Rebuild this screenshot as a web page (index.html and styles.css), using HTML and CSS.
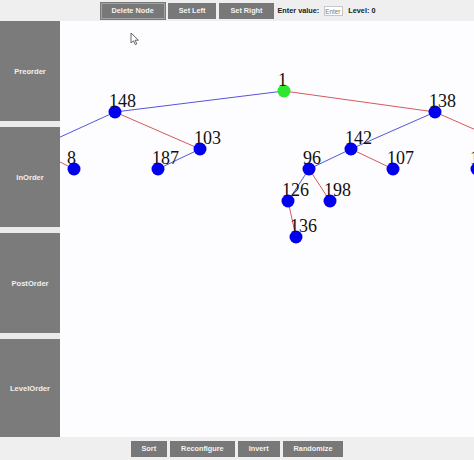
FILE: index.html
```html
<!DOCTYPE html>
<html>
<head>
<meta charset="utf-8">
<link rel="stylesheet" href="styles.css">
</head>
<body>
<div class="app">
  <div class="bar top">
    <button class="btn focused">Delete Node</button>
    <button class="btn">Set Left</button>
    <button class="btn">Set Right</button>
    <span class="label first">Enter value:</span>
    <input class="value" type="text" placeholder="Enter">
    <span class="label">Level: 0</span>
  </div>
  <div class="middle">
    <div class="sidebar">
      <div class="panel">Preorder</div>
      <div class="panel">InOrder</div>
      <div class="panel">PostOrder</div>
      <div class="panel last">LevelOrder</div>
    </div>
    <div class="canvas">
      <svg class="tree" width="414" height="416" viewBox="60 21 414 416">
        <g class="edges">
          <line class="l" x1="284" y1="91" x2="115" y2="112"/>
          <line class="r" x1="284" y1="91" x2="435" y2="112"/>
          <line class="l" x1="115" y1="112" x2="34" y2="149"/>
          <line class="r" x1="115" y1="112" x2="200" y2="149"/>
          <line class="r" x1="34" y1="149" x2="74" y2="169"/>
          <line class="l" x1="200" y1="149" x2="158" y2="169"/>
          <line class="l" x1="435" y1="112" x2="351" y2="149"/>
          <line class="r" x1="435" y1="112" x2="519" y2="149"/>
          <line class="l" x1="519" y1="149" x2="477" y2="169"/>
          <line class="l" x1="351" y1="149" x2="309" y2="169"/>
          <line class="r" x1="351" y1="149" x2="393" y2="169"/>
          <line class="l" x1="309" y1="169" x2="288" y2="201"/>
          <line class="r" x1="309" y1="169" x2="330" y2="201"/>
          <line class="r" x1="288" y1="201" x2="296" y2="237"/>
        </g>
        <g class="nodes">
          <circle class="root" cx="284" cy="91" r="6.5"/>
          <circle cx="115" cy="112" r="6.5"/>
          <circle cx="435" cy="112" r="6.5"/>
          <circle cx="74" cy="169" r="6.5"/>
          <circle cx="158" cy="169" r="6.5"/>
          <circle cx="200" cy="149" r="6.5"/>
          <circle cx="351" cy="149" r="6.5"/>
          <circle cx="309" cy="169" r="6.5"/>
          <circle cx="393" cy="169" r="6.5"/>
          <circle cx="288" cy="201" r="6.5"/>
          <circle cx="330" cy="201" r="6.5"/>
          <circle cx="296" cy="237" r="6.5"/>
          <circle cx="477" cy="169" r="6.5"/>
        </g>
        <g class="labels">
          <text x="278" y="86">1</text>
          <text x="109" y="107">148</text>
          <text x="429" y="107">138</text>
          <text x="67" y="164">8</text>
          <text x="152" y="164">187</text>
          <text x="194" y="144">103</text>
          <text x="345" y="144">142</text>
          <text x="303" y="164">96</text>
          <text x="387" y="164">107</text>
          <text x="282" y="196">126</text>
          <text x="324" y="196">198</text>
          <text x="290" y="232">136</text>
          <text x="470" y="164">1</text>
        </g>
      </svg>
      <svg class="cursor" width="10" height="14" viewBox="0 0 10 14">
        <path d="M1 1 L1 11 L3.5 8.8 L5.3 12.6 L6.8 11.9 L5.1 8.2 L8.4 8.2 Z" fill="#fff" stroke="#555" stroke-width="0.9"/>
      </svg>
    </div>
  </div>
  <div class="bar bottom">
    <button class="btn">Sort</button>
    <button class="btn">Reconfigure</button>
    <button class="btn">Invert</button>
    <button class="btn">Randomize</button>
  </div>
</div>
</body>
</html>
```
FILE: styles.css
```css
html, body {
  margin: 0;
  padding: 0;
  background: #fdfcff;
}
.app {
  width: 474px;
  height: 460px;
  display: flex;
  flex-direction: column;
  overflow: hidden;
  font-family: "Liberation Sans", Arial, sans-serif;
}
.bar {
  background: #efefef;
  display: flex;
  align-items: flex-start;
  justify-content: center;
  gap: 3px;
  flex: none;
  box-sizing: border-box;
}
.bar.top {
  height: 21px;
  padding-top: 3px;
  padding-left: 2px;
}
.bar.bottom {
  height: 23px;
  padding-top: 4px;
}
.btn {
  height: 16px;
  margin: 0;
  padding: 0 10px;
  border: 1px solid #777;
  background: #787878;
  color: #f4f4f4;
  font-family: "Liberation Sans", Arial, sans-serif;
  font-weight: bold;
  font-size: 7.3px;
  line-height: 14px;
}
.btn.focused {
  border-color: #a4a4a4;
  box-shadow: 0 0 0 1px #7a7a7a;
}
.label {
  font-size: 7.3px;
  font-weight: bold;
  color: #222;
  line-height: 16px;
  margin-left: 1px;
}
.label.first {
  margin-left: 1px;
}
.value {
  width: 19px;
  height: 10px;
  box-sizing: border-box;
  margin: 3px 1px 0 2px;
  padding: 0;
  border: 1px solid #c8c8c8;
  background: #fff;
  font-family: "Liberation Sans", Arial, sans-serif;
  font-size: 6.3px;
}
.value::placeholder {
  color: #777;
}
.middle {
  flex: 1;
  display: flex;
  min-height: 0;
}
.sidebar {
  width: 60px;
  flex: none;
  display: flex;
  flex-direction: column;
  gap: 6px;
  background: #ebebeb;
}
.panel {
  height: 100px;
  background: #7b7b7b;
  color: #f0f0f0;
  font-size: 7.6px;
  font-weight: bold;
  display: flex;
  align-items: center;
  justify-content: center;
  flex: none;
}
.panel.last {
  height: 98px;
}
.canvas {
  flex: 1;
  position: relative;
  background: #fdfcff;
}
.tree {
  display: block;
}
.edges line {
  stroke-width: 1;
}
.edges .l {
  stroke: #5656d6;
}
.edges .r {
  stroke: #d45a5a;
}
.nodes circle {
  fill: #0000ee;
}
.nodes circle.root {
  fill: #2ee82e;
}
.labels text {
  font-family: "Liberation Serif", "Times New Roman", serif;
  font-size: 18px;
  fill: #111;
}
.cursor {
  position: absolute;
  left: 70px;
  top: 11px;
}
```
